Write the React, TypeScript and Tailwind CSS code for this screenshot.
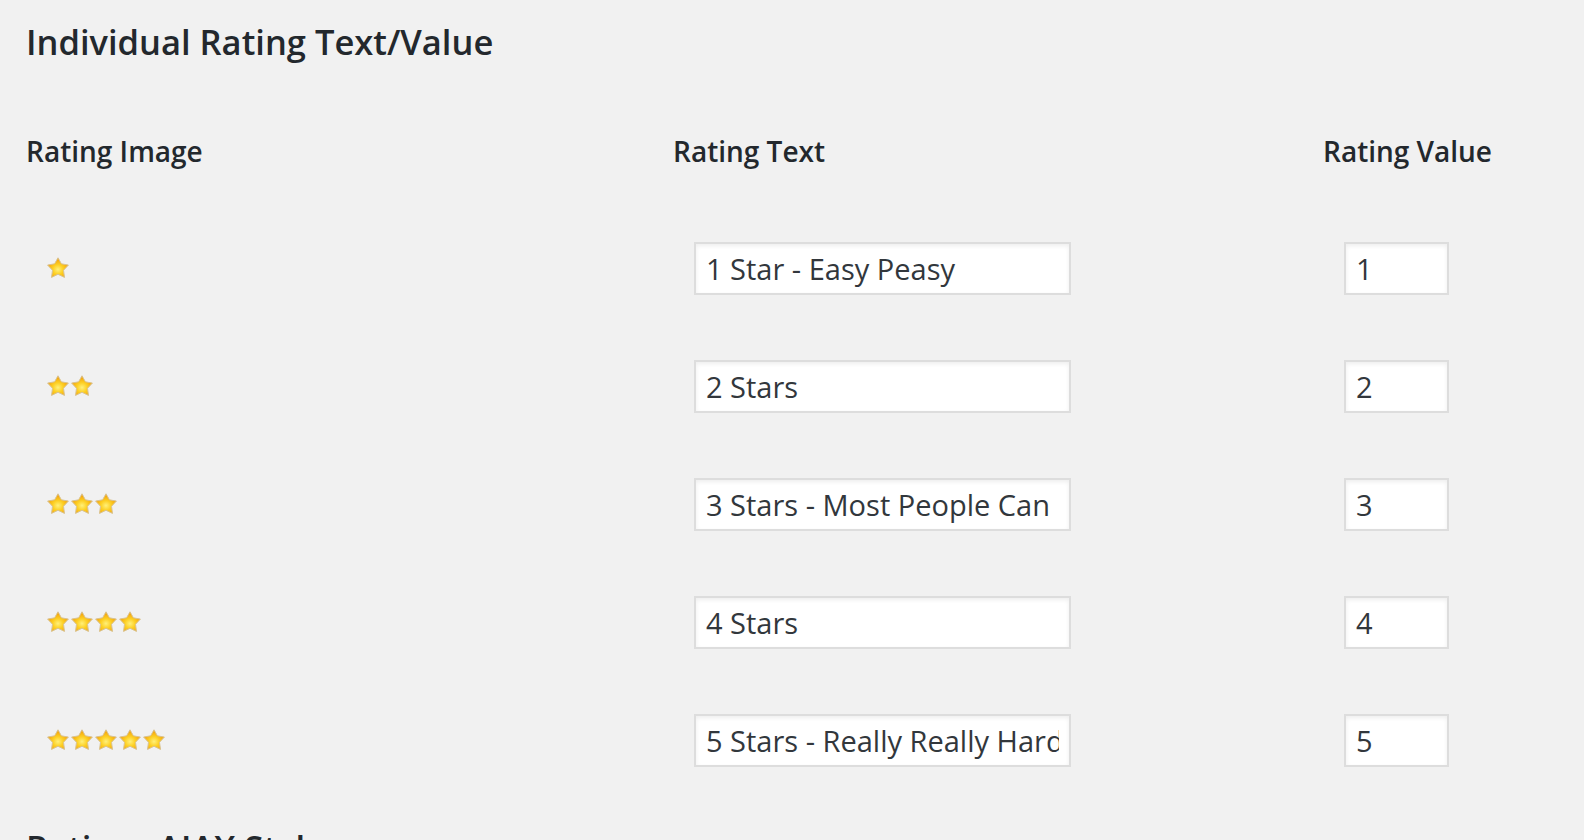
const rows = [
  { stars: 1, text: "1 Star - Easy Peasy", value: "1" },
  { stars: 2, text: "2 Stars", value: "2" },
  { stars: 3, text: "3 Stars - Most People Can Do It", value: "3" },
  { stars: 4, text: "4 Stars", value: "4" },
  { stars: 5, text: "5 Stars - Really Really Hard", value: "5" },
];

function Star() {
  return (
    <svg width="24" height="22" viewBox="0 0 24 22" className="block">
      <defs>
        <radialGradient id="starFill" cx="0.5" cy="0.6" r="0.55">
          <stop offset="0%" stopColor="#fff07a" />
          <stop offset="45%" stopColor="#fdd024" />
          <stop offset="100%" stopColor="#f29e0c" />
        </radialGradient>
      </defs>
      <path
        d="M12 0.8 L15.4 6.8 L22.4 8.1 L17.5 13.3 L18.5 20.4 L12 17.3 L5.5 20.4 L6.5 13.3 L1.6 8.1 L8.6 6.8 Z"
        fill="url(#starFill)"
        stroke="#d9c391"
        strokeWidth="1"
        strokeLinejoin="round"
      />
    </svg>
  );
}

const inputCls =
  "h-[53px] border-2 border-[#ddd] bg-white px-[10px] text-[29px] text-[#32373c] shadow-[inset_0_2px_4px_rgba(0,0,0,0.07)] outline-none";

export default function App() {
  return (
    <div
      className="h-[840px] overflow-hidden bg-[#f1f1f1] pl-[26px] text-[#23282d]"
      style={{ fontFamily: '"Open Sans", "Noto Sans", sans-serif' }}
    >
      <h2 className="pt-[18px] text-[34.5px] font-semibold leading-[48px]">
        Individual Rating Text/Value
      </h2>

      <div className="mt-[26px] grid grid-cols-[647px_650px_1fr]">
        <div className="flex h-[117px] items-center text-[28px] font-semibold">Rating Image</div>
        <div className="flex h-[117px] items-center text-[28px] font-semibold">Rating Text</div>
        <div className="flex h-[117px] items-center text-[28px] font-semibold">Rating Value</div>

        {rows.map((r) => (
          <div key={r.value} className="contents">
            <div className="flex h-[118px] items-center pl-[20px]">
              {Array.from({ length: r.stars }).map((_, i) => (
                <Star key={i} />
              ))}
            </div>
            <div className="flex h-[118px] items-center pl-[21px]">
              <input readOnly value={r.text} className={`${inputCls} w-[377px]`} />
            </div>
            <div className="flex h-[118px] items-center pl-[21px]">
              <input readOnly value={r.value} className={`${inputCls} w-[105px]`} />
            </div>
          </div>
        ))}
      </div>

      <h2 className="mt-[25px] text-[34.5px] font-semibold leading-[48px]">Ratings AJAX Style</h2>
    </div>
  );
}
